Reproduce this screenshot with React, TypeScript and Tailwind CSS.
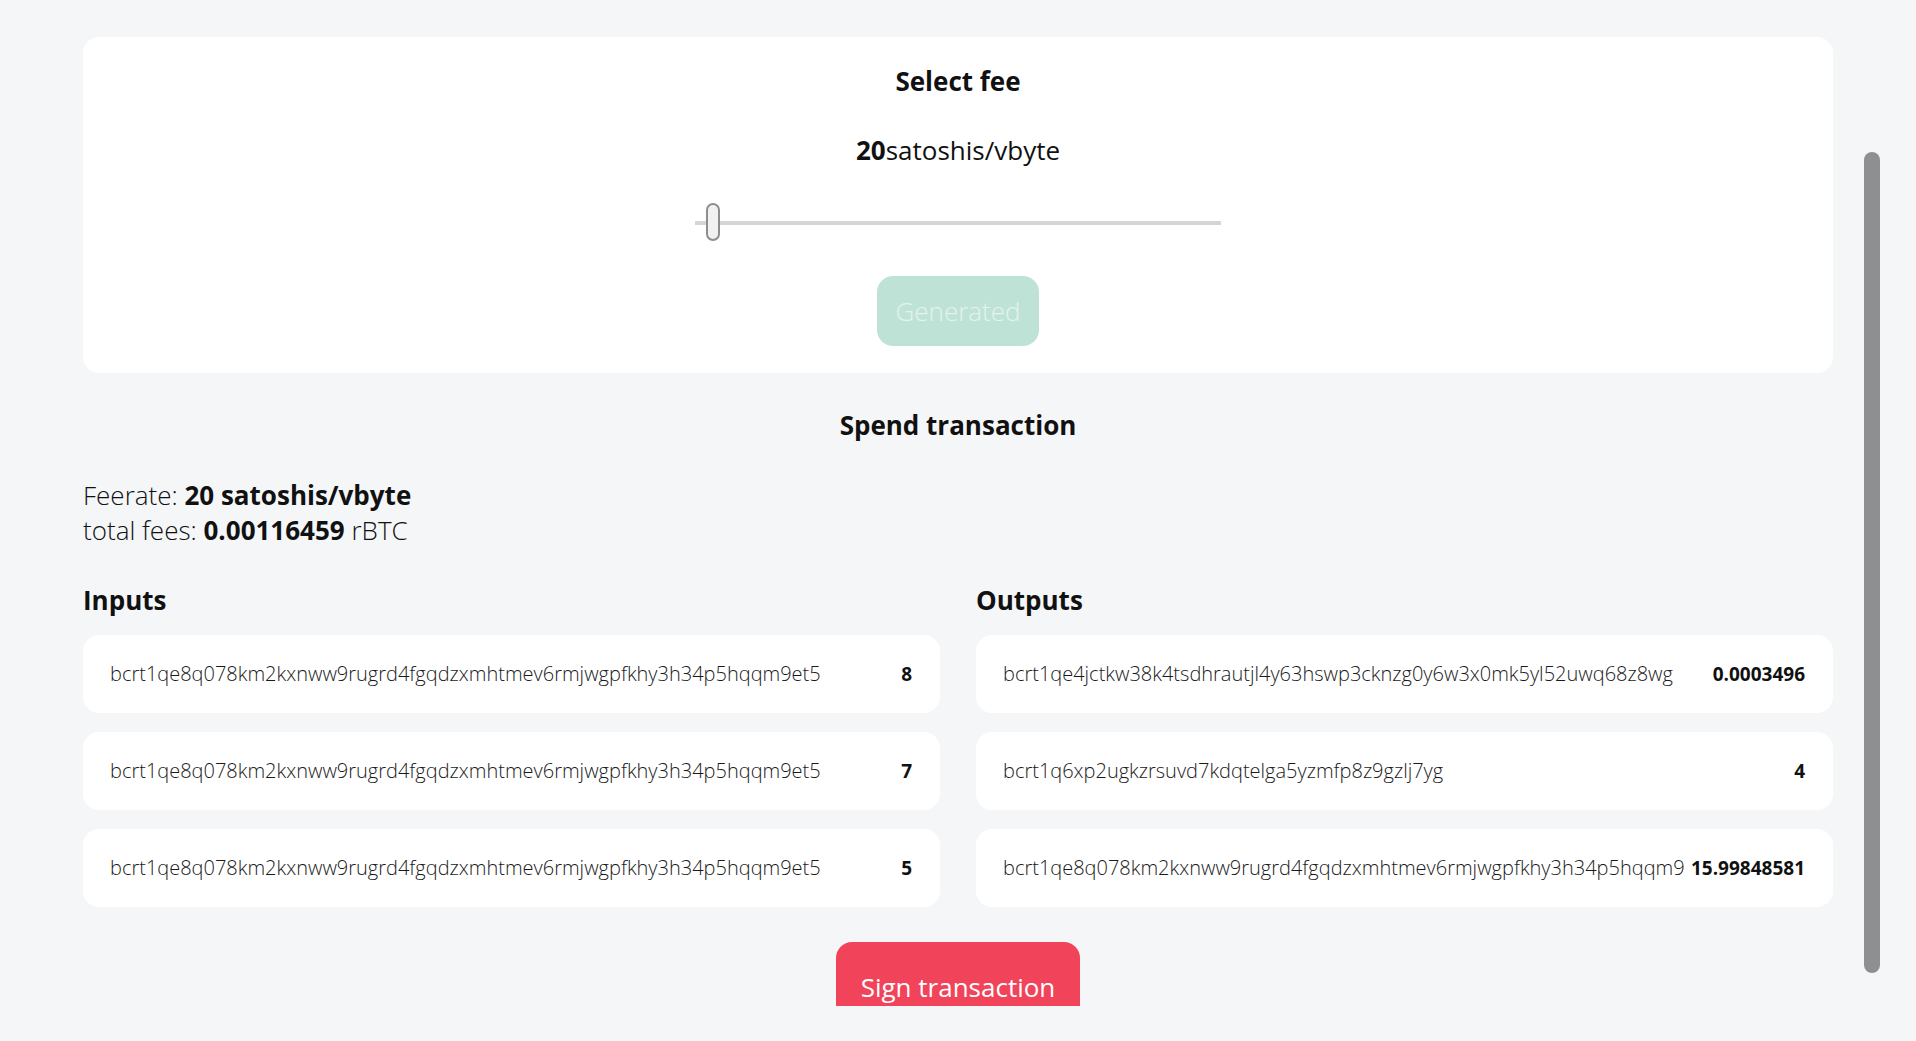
import React from 'react'

const inputs = [
  { address: 'bcrt1qe8q078km2kxnww9rugrd4fgqdzxmhtmev6rmjwgpfkhy3h34p5hqqm9et5', amount: '8' },
  { address: 'bcrt1qe8q078km2kxnww9rugrd4fgqdzxmhtmev6rmjwgpfkhy3h34p5hqqm9et5', amount: '7' },
  { address: 'bcrt1qe8q078km2kxnww9rugrd4fgqdzxmhtmev6rmjwgpfkhy3h34p5hqqm9et5', amount: '5' },
]

const outputs = [
  { address: 'bcrt1qe4jctkw38k4tsdhrautjl4y63hswp3cknzg0y6w3x0mk5yl52uwq68z8wg', amount: '0.0003496' },
  { address: 'bcrt1q6xp2ugkzrsuvd7kdqtelga5yzmfp8z9gzlj7yg', amount: '4' },
  { address: 'bcrt1qe8q078km2kxnww9rugrd4fgqdzxmhtmev6rmjwgpfkhy3h34p5hqqm9et5', amount: '15.99848581' },
]

function TxRow({ address, amount }: { address: string; amount: string }) {
  return (
    <div className="flex h-[78px] items-center justify-between rounded-[16px] bg-white pl-[27px] pr-[28px]">
      <span className="min-w-0 overflow-hidden whitespace-nowrap text-[20px] font-light text-[#1a1a1a]">{address}</span>
      <span className="ml-[6px] shrink-0 text-[19px] font-bold text-[#111]">{amount}</span>
    </div>
  )
}

export default function App() {
  return (
    <div
      className="relative h-screen w-full overflow-hidden bg-[#f5f6f8] font-light text-[#111]"
      style={{ fontFamily: '"Open Sans", "Noto Sans", sans-serif' }}
    >
      <div className="h-[1006px] overflow-hidden">
        <div className="mx-auto w-[1750px] pt-[37px]">
          {/* Select fee */}
          <div className="flex flex-col items-center rounded-[16px] bg-white pt-[27px] pb-[27px]">
            <h2 className="text-[26px] leading-[34px] font-bold">Select fee</h2>
            <p className="mt-[34px] text-[26px] leading-[36px] font-normal">
              <span className="font-bold">20</span>satoshis/vbyte
            </p>
            <div className="relative mt-[35px] h-[38px] w-[526px]">
              <div className="absolute top-[18px] left-0 h-[4px] w-full bg-[#d5d5d5]" />
              <div className="absolute top-0 left-[11px] h-[38px] w-[14px] rounded-full border-2 border-[#8e8e8e] bg-[#f1f1f1]" />
            </div>
            <button className="mt-[35px] h-[70px] w-[162px] rounded-[16px] bg-[#bfe2d7] text-[26px] font-light text-[#e4f3ed]">
              Generated
            </button>
          </div>

          {/* Spend transaction */}
          <h2 className="mt-[35px] text-center text-[26px] leading-[34px] font-bold">Spend transaction</h2>

          <div className="mt-[36px] text-[26px] leading-[35px]">
            <p>
              Feerate: <span className="font-bold">20 satoshis/vbyte</span>
            </p>
            <p>
              total fees: <span className="font-bold">0.00116459</span> rBTC
            </p>
          </div>

          <div className="mt-[35px] grid grid-cols-2 gap-x-[36px]">
            <div>
              <h3 className="text-[26px] leading-[34px] font-bold">Inputs</h3>
              <div className="mt-[18px] flex flex-col gap-[19px]">
                {inputs.map((r, i) => (
                  <TxRow key={i} address={r.address} amount={r.amount} />
                ))}
              </div>
            </div>
            <div>
              <h3 className="text-[26px] leading-[34px] font-bold">Outputs</h3>
              <div className="mt-[18px] flex flex-col gap-[19px]">
                {outputs.map((r, i) => (
                  <TxRow key={i} address={r.address} amount={r.amount} />
                ))}
              </div>
            </div>
          </div>

          <div className="mt-[35px] flex justify-center">
            <button className="h-[90px] w-[244px] rounded-[16px] bg-[#f1435a] text-[26px] font-normal text-white">
              Sign transaction
            </button>
          </div>
        </div>
      </div>

      {/* custom scrollbar thumb */}
      <div className="absolute top-[152px] left-[1864px] h-[821px] w-[16px] rounded-full bg-[#8e8f91]" />
    </div>
  )
}
